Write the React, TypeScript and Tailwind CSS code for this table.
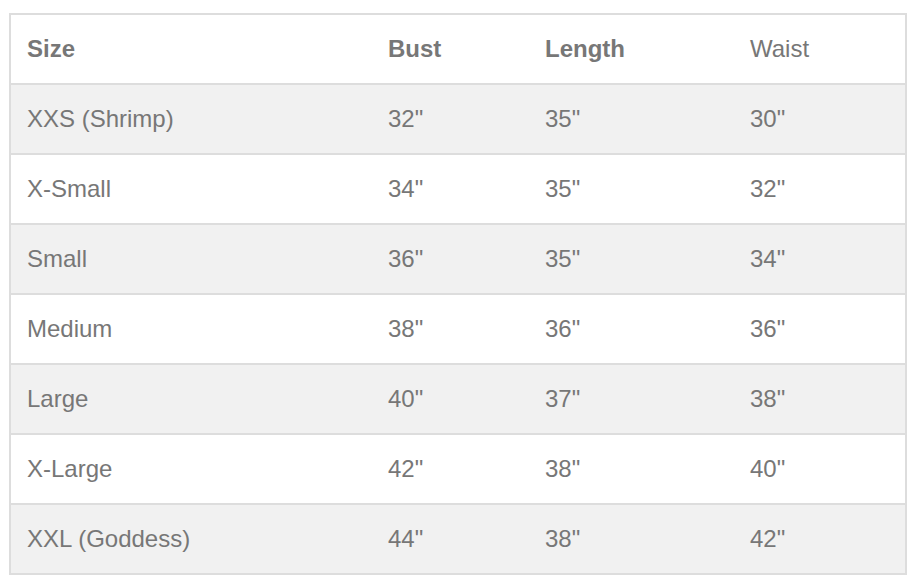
import React from "react";

const rows = [
    ["XXS (Shrimp)", "32\"", "35\"", "30\""],
    ["X-Small", "34\"", "35\"", "32\""],
    ["Small", "36\"", "35\"", "34\""],
    ["Medium", "38\"", "36\"", "36\""],
    ["Large", "40\"", "37\"", "38\""],
    ["X-Large", "42\"", "38\"", "40\""],
    ["XXL (Goddess)", "44\"", "38\"", "42\""],
];

export default function App() {
    return (
        <div className="bg-white w-[915px] h-[584px] pt-[13px] pl-[9px]" style={{ fontFamily: '"Liberation Sans", Arial, sans-serif' }}>
            <table className="border-collapse border-2 border-[#dddddd] text-[24px] text-[#777777] table-fixed w-[898px]">
                <colgroup>
                    <col className="w-[362px]" />
                    <col className="w-[157px]" />
                    <col className="w-[205px]" />
                    <col />
                </colgroup>
                <thead>
                    <tr className="h-[70px] bg-white">
                        <th className="text-left font-bold pl-[16px]">Size</th>
                        <th className="text-left font-bold pl-[16px]">Bust</th>
                        <th className="text-left font-bold pl-[16px]">Length</th>
                        <th className="text-left font-normal pl-[16px]">Waist</th>
                    </tr>
                </thead>
                <tbody>
                    {rows.map((r, i) => (
                        <tr key={i} className={i % 2 === 0 ? "h-[70px] border-t-2 border-[#dddddd] bg-[#f1f1f1]" : "h-[70px] border-t-2 border-[#dddddd] bg-white"}>
                            {r.map((c, j) => (
                                <td key={j} className="pl-[16px]">{c}</td>
                            ))}
                        </tr>
                    ))}
                </tbody>
            </table>
        </div>
    );
}
